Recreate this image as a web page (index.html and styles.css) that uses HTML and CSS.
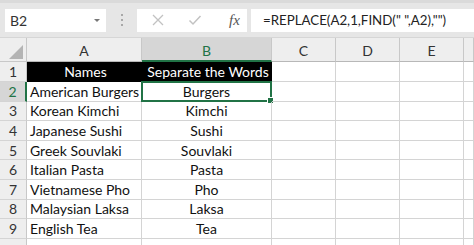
FILE: index.html
```html
<!DOCTYPE html>
<html lang="en">
<head>
    <meta charset="UTF-8">
    <title>Separate the Words</title>
    <link rel="stylesheet" href="styles.css">
</head>
<body>
    <div class="toolbar">
        <div class="name-box">
            <span>B2</span>
            <svg class="caret" width="6" height="4" viewBox="0 0 6 4"><path d="M0 0 L6 0 L3 3 Z" fill="#777"/></svg>
        </div>
        <div class="grip">
            <span></span><span></span><span></span>
        </div>
        <div class="fx-buttons">
            <svg width="14" height="14" viewBox="0 0 14 14"><path d="M2 2 L12 12 M12 2 L2 12" stroke="#c2c2c2" stroke-width="1.3" fill="none"/></svg>
            <svg width="14" height="14" viewBox="0 0 14 14"><path d="M1.5 7.5 L5 11 L12.5 3" stroke="#c2c2c2" stroke-width="1.5" fill="none"/></svg>
            <span class="fx">fx</span>
        </div>
        <div class="formula">=REPLACE(A2,1,FIND(" ",A2),"")</div>
    </div>

    <div class="sheet">
        <div class="corner"><span></span></div>
        <div class="col-head">A</div>
        <div class="col-head selected">B</div>
        <div class="col-head">C</div>
        <div class="col-head">D</div>
        <div class="col-head">E</div>
        <div class="col-head"></div>

        <div class="row-head">1</div>
        <div class="cell title">Names</div>
        <div class="cell title">Separate the Words</div>
        <div class="cell"></div><div class="cell"></div><div class="cell"></div><div class="cell"></div>

        <div class="row-head selected">2</div>
        <div class="cell">American Burgers</div>
        <div class="cell center active">Burgers<i class="handle"></i></div>
        <div class="cell"></div><div class="cell"></div><div class="cell"></div><div class="cell"></div>

        <div class="row-head">3</div>
        <div class="cell">Korean Kimchi</div>
        <div class="cell center">Kimchi</div>
        <div class="cell"></div><div class="cell"></div><div class="cell"></div><div class="cell"></div>

        <div class="row-head">4</div>
        <div class="cell">Japanese Sushi</div>
        <div class="cell center">Sushi</div>
        <div class="cell"></div><div class="cell"></div><div class="cell"></div><div class="cell"></div>

        <div class="row-head">5</div>
        <div class="cell">Greek Souvlaki</div>
        <div class="cell center">Souvlaki</div>
        <div class="cell"></div><div class="cell"></div><div class="cell"></div><div class="cell"></div>

        <div class="row-head">6</div>
        <div class="cell">Italian Pasta</div>
        <div class="cell center">Pasta</div>
        <div class="cell"></div><div class="cell"></div><div class="cell"></div><div class="cell"></div>

        <div class="row-head">7</div>
        <div class="cell">Vietnamese Pho</div>
        <div class="cell center">Pho</div>
        <div class="cell"></div><div class="cell"></div><div class="cell"></div><div class="cell"></div>

        <div class="row-head">8</div>
        <div class="cell">Malaysian Laksa</div>
        <div class="cell center">Laksa</div>
        <div class="cell"></div><div class="cell"></div><div class="cell"></div><div class="cell"></div>

        <div class="row-head">9</div>
        <div class="cell">English Tea</div>
        <div class="cell center">Tea</div>
        <div class="cell"></div><div class="cell"></div><div class="cell"></div><div class="cell"></div>

        <div class="row-head"></div>
        <div class="cell"></div><div class="cell"></div>
        <div class="cell"></div><div class="cell"></div><div class="cell"></div><div class="cell"></div>
    </div>
</body>
</html>
```

FILE: styles.css
```css
html, body {
    overflow: hidden;
}

body {
    margin: 0;
    width: 474px;
    height: 245px;
    background-color: #fff;
    font-family: Lato, "Open Sans", sans-serif;
    color: #111;
}

.toolbar {
    display: flex;
    align-items: center;
    height: 38px;
    padding: 0 0 0 5px;
    background-color: #e6e6e6;
    border-top: 3px solid #dadada;
    border-bottom: 1px solid #d6d6d6;
    box-sizing: border-box;
}

.name-box {
    display: flex;
    align-items: center;
    justify-content: space-between;
    width: 101px;
    height: 23px;
    padding: 0 6px 0 5px;
    background-color: #fff;
    box-sizing: border-box;
    font-size: 14px;
    color: #333;
}

.name-box .caret {
    margin-top: 1px;
}

.grip {
    display: flex;
    flex-direction: column;
    gap: 3px;
    width: 31px;
    align-items: center;
}

.grip span {
    width: 2px;
    height: 2px;
    background-color: #a8a8a8;
}

.fx-buttons {
    display: flex;
    align-items: center;
    width: 110px;
    height: 23px;
    padding-left: 14px;
    gap: 23px;
    background-color: #fff;
    box-sizing: border-box;
}

.fx {
    font-family: "Liberation Serif", serif;
    font-style: italic;
    font-size: 15px;
    color: #555;
    margin-left: 4px;
}

.formula {
    flex: 1;
    height: 23px;
    line-height: 23px;
    margin-left: 4px;
    padding-left: 12px;
    background-color: #fff;
    font-size: 13.3px;
    color: #222;
    white-space: nowrap;
}

.sheet {
    display: grid;
    height: 207px;
    overflow: hidden;
    grid-template-columns: 27px 115px 130px 64px 64px 64px 10px;
    grid-template-rows: 24px 20px repeat(9, 19.6px);
}

.corner {
    display: flex;
    align-items: flex-end;
    justify-content: flex-end;
    padding: 0 3px 2px 0;
    background-color: #eeeeee;
    border-right: 1px solid #c8c8c8;
    border-bottom: 1px solid #c8c8c8;
}

.corner span {
    width: 0;
    height: 0;
    border-left: 14px solid transparent;
    border-bottom: 14px solid #b4b4b4;
}

.col-head {
    display: flex;
    align-items: center;
    justify-content: center;
    background-color: #eeeeee;
    border-right: 1px solid #c8c8c8;
    border-bottom: 1px solid #b8b8b8;
    font-size: 14px;
    color: #333;
    padding-top: 2px;
    box-sizing: border-box;
}

.col-head.selected {
    background-color: #d6d6d6;
    border-bottom: 2px solid #217346;
    color: #217346;
}

.row-head {
    display: flex;
    align-items: center;
    justify-content: center;
    background-color: #eeeeee;
    border-right: 1px solid #c8c8c8;
    border-bottom: 1px solid #d4d4d4;
    font-size: 14px;
    color: #333;
    box-sizing: border-box;
}

.row-head.selected {
    background-color: #d6d6d6;
    border-right: 2px solid #217346;
    color: #217346;
}

.cell {
    position: relative;
    display: flex;
    align-items: center;
    padding-left: 3px;
    border-right: 1px solid #d4d4d4;
    border-bottom: 1px solid #d4d4d4;
    font-size: 14px;
    white-space: nowrap;
    box-sizing: border-box;
}

.cell.center {
    justify-content: center;
    padding-left: 0;
}

.cell.title {
    justify-content: center;
    background-color: #000;
    color: #fff;
    border-color: #000;
}

.cell.active {
    border: 2px solid #217346;
    margin: -1px 0 0 -1px;
}

.handle {
    position: absolute;
    right: -4px;
    bottom: -4px;
    width: 5px;
    height: 5px;
    background-color: #217346;
    border: 1px solid #fff;
}
```
